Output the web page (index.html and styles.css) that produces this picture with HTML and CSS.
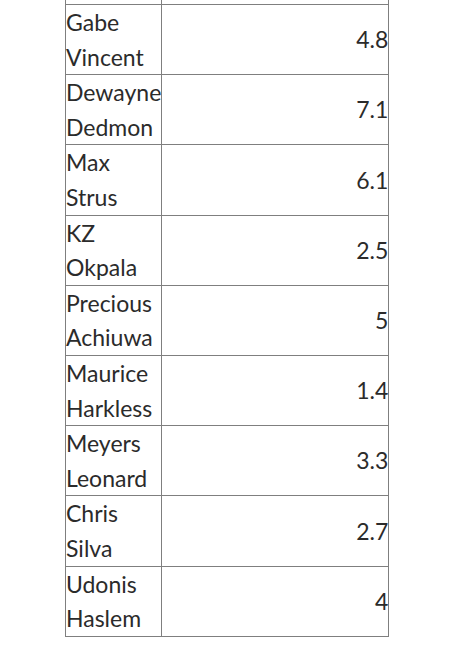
FILE: index.html
```html
<!DOCTYPE html>
<html lang="en">
<head>
<meta charset="utf-8">
<title>Players</title>
<link rel="stylesheet" href="styles.css">
</head>
<body>
<div class="page">
  <table class="stats">
    <colgroup>
      <col class="col-name">
      <col class="col-value">
    </colgroup>
    <tbody>
      <tr class="clipped"><td></td><td></td></tr>
      <tr><td>Gabe Vincent</td><td class="num">4.8</td></tr>
      <tr><td>Dewayne Dedmon</td><td class="num">7.1</td></tr>
      <tr><td>Max Strus</td><td class="num">6.1</td></tr>
      <tr><td>KZ Okpala</td><td class="num">2.5</td></tr>
      <tr><td>Precious Achiuwa</td><td class="num">5</td></tr>
      <tr><td>Maurice Harkless</td><td class="num">1.4</td></tr>
      <tr><td>Meyers Leonard</td><td class="num">3.3</td></tr>
      <tr><td>Chris Silva</td><td class="num">2.7</td></tr>
      <tr><td>Udonis Haslem</td><td class="num">4</td></tr>
    </tbody>
  </table>
</div>
</body>
</html>
```
FILE: styles.css
```css
html, body {
  margin: 0;
  padding: 0;
  background: #ffffff;
}

.page {
  padding-left: 65px;
  overflow: hidden;
  height: 647px;
}

.stats {
  border-collapse: collapse;
  margin-top: -66px;
  font-family: Lato, "Liberation Sans", sans-serif;
  font-size: 23px;
  line-height: 34.6px;
  color: #2b2b2b;
}

.col-name {
  width: 96px;
}

.col-value {
  width: 227px;
}

.stats td {
  border: 1px solid #7f7f7f;
  padding: 0;
  vertical-align: middle;
  text-align: left;
}

.stats td.num {
  text-align: right;
}

.clipped td {
  height: 69px;
}
```
